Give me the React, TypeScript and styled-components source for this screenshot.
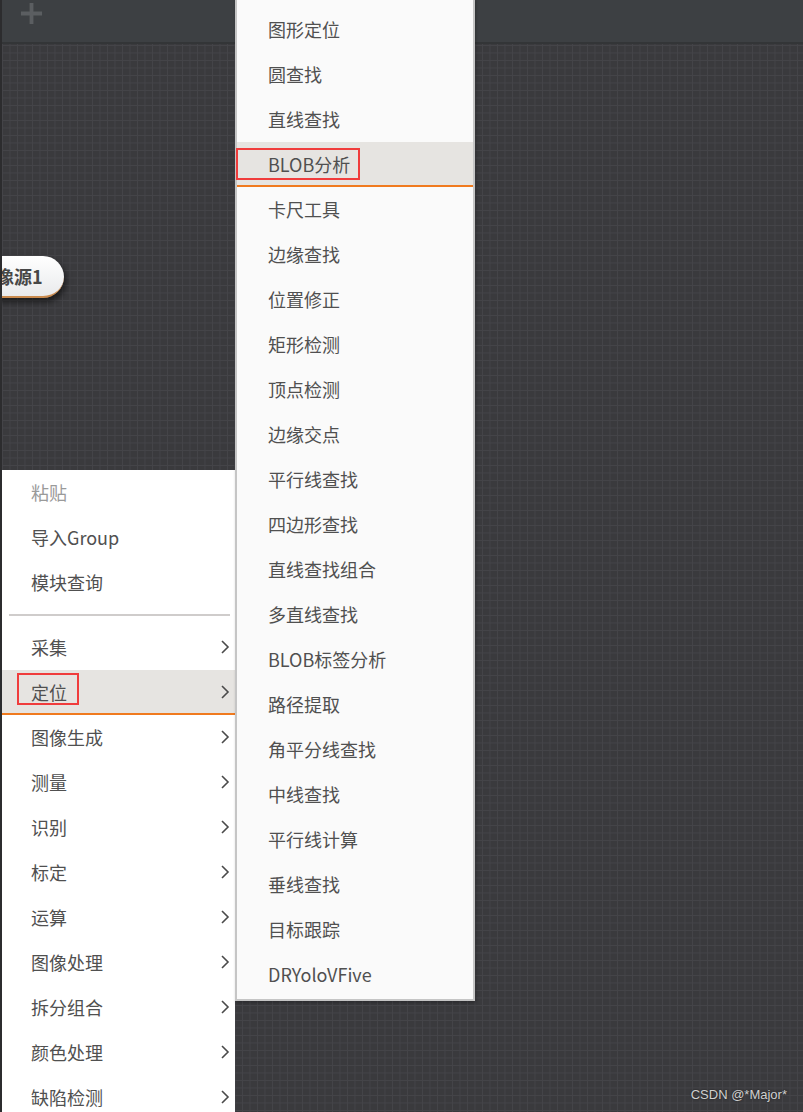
import { createGlobalStyle, styled } from "styled-components";

const GlobalStyle = createGlobalStyle`
	html, body {
		margin: 0;
		padding: 0;
		background: #3b3b3e;
	}
	* {
		box-sizing: border-box;
	}
`;

type Mark = { top: number; left: number; width: number };
type Item = { label: string; disabled?: boolean; sub?: boolean; active?: boolean; mark?: Mark };

const contextItems: (Item | "sep")[] = [
	{ label: "粘贴", disabled: true },
	{ label: "导入Group" },
	{ label: "模块查询" },
	"sep",
	{ label: "采集", sub: true },
	{ label: "定位", sub: true, active: true, mark: { top: 3, left: 15, width: 62 } },
	{ label: "图像生成", sub: true },
	{ label: "测量", sub: true },
	{ label: "识别", sub: true },
	{ label: "标定", sub: true },
	{ label: "运算", sub: true },
	{ label: "图像处理", sub: true },
	{ label: "拆分组合", sub: true },
	{ label: "颜色处理", sub: true },
	{ label: "缺陷检测", sub: true },
];

const locateItems: Item[] = [
	{ label: "图形定位" },
	{ label: "圆查找" },
	{ label: "直线查找" },
	{ label: "BLOB分析", active: true, mark: { top: 6, left: -1, width: 124 } },
	{ label: "卡尺工具" },
	{ label: "边缘查找" },
	{ label: "位置修正" },
	{ label: "矩形检测" },
	{ label: "顶点检测" },
	{ label: "边缘交点" },
	{ label: "平行线查找" },
	{ label: "四边形查找" },
	{ label: "直线查找组合" },
	{ label: "多直线查找" },
	{ label: "BLOB标签分析" },
	{ label: "路径提取" },
	{ label: "角平分线查找" },
	{ label: "中线查找" },
	{ label: "平行线计算" },
	{ label: "垂线查找" },
	{ label: "目标跟踪" },
	{ label: "DRYoloVFive" },
];

function Chevron() {
	return (
		<svg width="10" height="14" viewBox="0 0 10 14">
			<polyline points="2,1 8,7 2,13" fill="none" stroke="#4a4a4a" strokeWidth="1.6" />
		</svg>
	);
}

function MenuRow({ item, indent }: { item: Item; indent: number }) {
	return (
		<Row $active={item.active} $indent={indent}>
			<Label $disabled={item.disabled}>{item.label}</Label>
			{item.sub && <Chevron />}
			{item.mark && (
				<MarkBox style={{ top: item.mark.top, left: item.mark.left, width: item.mark.width }} />
			)}
		</Row>
	);
}

export default function App() {
	return (
		<>
			<GlobalStyle />
			<Canvas>
				<TopBar>
					<PlusIcon viewBox="0 0 24 24">
						<path d="M12 1v22M1 12h22" stroke="#5b5e61" strokeWidth="4" />
					</PlusIcon>
				</TopBar>

				<Node>图像源1</Node>

				<ContextMenu>
					{contextItems.map((it, i) =>
						it === "sep" ? (
							<Separator key={`sep-${i}`} />
						) : (
							<MenuRow key={it.label} item={it} indent={29} />
						)
					)}
				</ContextMenu>

				<SubMenu>
					{locateItems.map((it) => (
						<MenuRow key={it.label} item={it} indent={31} />
					))}
				</SubMenu>

				<Watermark>CSDN @*Major*</Watermark>
			</Canvas>
		</>
	);
}

const Canvas = styled.div`
	position: relative;
	width: 803px;
	height: 1112px;
	overflow: hidden;
	border-left: 2px solid #2c2c2e;
	background-color: #3a3a3d;
	background-image:
		linear-gradient(#444448 1px, transparent 1px),
		linear-gradient(90deg, #444448 1px, transparent 1px);
	background-size: 7.5px 7.5px;
	font-family: "Noto Sans CJK SC", "Noto Sans", sans-serif;
`;

const TopBar = styled.div`
	height: 44px;
	background: #3d4043;
	border-bottom: 2px solid #333537;
	display: flex;
	align-items: flex-start;
	padding: 2px 0 0 18px;
`;

const PlusIcon = styled.svg`
	width: 23px;
	height: 23px;
`;

const Node = styled.div`
	position: absolute;
	top: 256px;
	left: -45px;
	height: 42px;
	padding: 0 21px;
	display: flex;
	align-items: center;
	border-radius: 21px;
	background: linear-gradient(#ffffff, #e9eaec);
	border-bottom: 2px solid #c98a4e;
	box-shadow: 2px 4px 6px rgb(0 0 0 / 0.55);
	font-weight: 700;
	font-size: 18px;
	color: #474747;
	white-space: nowrap;
`;

const ContextMenu = styled.div`
	position: absolute;
	top: 470px;
	left: 0;
	width: 233px;
	background: #ffffff;
`;

const SubMenu = styled.div`
	position: absolute;
	top: -2px;
	left: 233px;
	width: 240px;
	padding: 7px 0 2px;
	background: #fafafa;
	border: 2px solid #c5c5c5;
	box-shadow: 1px 2px 3px rgb(0 0 0 / 0.25);
`;

const Row = styled.div<{ $active?: boolean; $indent: number }>`
	position: relative;
	height: 45px;
	display: flex;
	align-items: center;
	justify-content: space-between;
	padding: 0 5px 0 ${(p) => p.$indent}px;
	background: ${(p) => (p.$active ? "#e6e4e1" : "transparent")};
	border-bottom: 2px solid ${(p) => (p.$active ? "#f07a1e" : "transparent")};
	font-size: 18px;
`;

const Label = styled.span<{ $disabled?: boolean }>`
	color: ${(p) => (p.$disabled ? "#9a9a9a" : "#505050")};
	white-space: nowrap;
`;

const MarkBox = styled.span`
	position: absolute;
	height: 32px;
	border: 2px solid #f03c3c;
	pointer-events: none;
`;

const Separator = styled.div`
	height: 20px;
	display: flex;
	align-items: center;
	padding: 0 5px 0 7px;

	&::before {
		content: "";
		flex: 1;
		height: 2px;
		background: #cfcccb;
	}
`;

const Watermark = styled.div`
	position: absolute;
	right: 16px;
	bottom: 10px;
	font-family: "Liberation Sans", Arial, sans-serif;
	font-size: 13px;
	color: #d0d0d0;
	text-shadow: 0 0 2px rgb(0 0 0 / 0.6);
`;
